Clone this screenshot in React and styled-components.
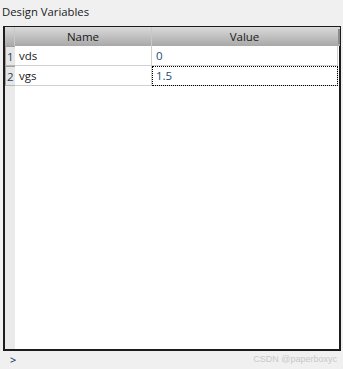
import React from "react";
import styled, { createGlobalStyle } from "styled-components";

const Global = createGlobalStyle`
  html, body { margin: 0; padding: 0; background: #f0f0f0; }
  body { font-family: "Open Sans", "DejaVu Sans", sans-serif; }
`;

const Page = styled.div`
  width: 343px;
  height: 369px;
  display: flex;
  flex-direction: column;
  background: #f0f0f0;
  overflow: hidden;
`;

const Title = styled.div`
  height: 26px;
  padding: 3px 0 0 2px;
  box-sizing: border-box;
  font-size: 11.3px;
  color: #1a1a1a;
  line-height: 18px;
`;

const Frame = styled.div`
  margin: 0 2px 0 3px;
  height: 325px;
  box-sizing: border-box;
  border: 2px solid #1c1c1c;
  border-top-width: 1.5px;
  background: #ffffff;
  display: flex;
  flex-direction: column;
`;

const Grid = styled.div`
  display: grid;
  grid-template-columns: 10px 137px 186px 1fr;
`;

const HeaderCell = styled.div`
  height: 19px;
  box-sizing: border-box;
  background: linear-gradient(#dadada, #a8a8a8);
  border-right: 1px solid ${(p) => (p.$last ? "transparent" : "#c8c8c8")};
  font-size: 11.5px;
  color: #1a1a1a;
  text-align: center;
  line-height: 19px;
`;

const Grip = styled.div`
  height: 19px;
  background: linear-gradient(#dadada, #a8a8a8);
  display: flex;
  justify-content: flex-start;
  padding-top: 2px;
  box-sizing: border-box;
  &::before {
    content: "";
    width: 2px;
    height: 15px;
    background: #8c8c8c;
  }
`;

const RowNum = styled.div`
  height: 20px;
  box-sizing: border-box;
  background: #e6e6e6;
  border-top: 1px solid #a0a0a0;
  border-left: 1px solid #a0a0a0;
  border-bottom: 1px solid #b8b8b8;
  font-size: 11.5px;
  color: #1f3f66;
  line-height: 19px;
  padding-left: 1px;
`;

const Cell = styled.div`
  height: 20px;
  box-sizing: border-box;
  border-right: 1px solid #d0d0d0;
  border-bottom: 1px solid #d0d0d0;
  font-size: 11.5px;
  line-height: 20px;
  padding-left: 4px;
  color: ${(p) => (p.$value ? "#1d4a78" : "#1a1a1a")};
  outline: ${(p) => (p.$focus ? "1px dotted #000" : "none")};
  outline-offset: -1px;
`;

const Filler = styled.div`
  height: 20px;
`;

const Body = styled.div`
  flex: 1;
  display: flex;
`;

const Gutter = styled.div`
  width: 10px;
  background: #eaeaea;
`;

const Status = styled.div`
  flex: 1;
  display: flex;
  justify-content: space-between;
  align-items: center;
  padding: 0 6px 2px 10px;
`;

const Prompt = styled.span`
  font-size: 11px;
  color: #1f3f66;
  font-weight: 600;
`;

const Watermark = styled.span`
  font-family: "Liberation Sans", Arial, sans-serif;
  font-size: 9px;
  color: #c8c8c8;
`;

const rows = [
  { n: 1, name: "vds", value: "0" },
  { n: 2, name: "vgs", value: "1.5", focus: true },
];

export default function App() {
  return (
    <Page>
      <Global />
      <Title>Design Variables</Title>
      <Frame>
        <Grid>
          <HeaderCell />
          <HeaderCell>Name</HeaderCell>
          <HeaderCell $last>Value</HeaderCell>
          <Grip />
          {rows.map((r) => (
            <React.Fragment key={r.n}>
              <RowNum>{r.n}</RowNum>
              <Cell>{r.name}</Cell>
              <Cell $value $focus={r.focus}>
                {r.value}
              </Cell>
              <Filler />
            </React.Fragment>
          ))}
        </Grid>
        <Body>
          <Gutter />
        </Body>
      </Frame>
      <Status>
        <Prompt>&gt;</Prompt>
        <Watermark>CSDN @paperboxyc</Watermark>
      </Status>
    </Page>
  );
}
